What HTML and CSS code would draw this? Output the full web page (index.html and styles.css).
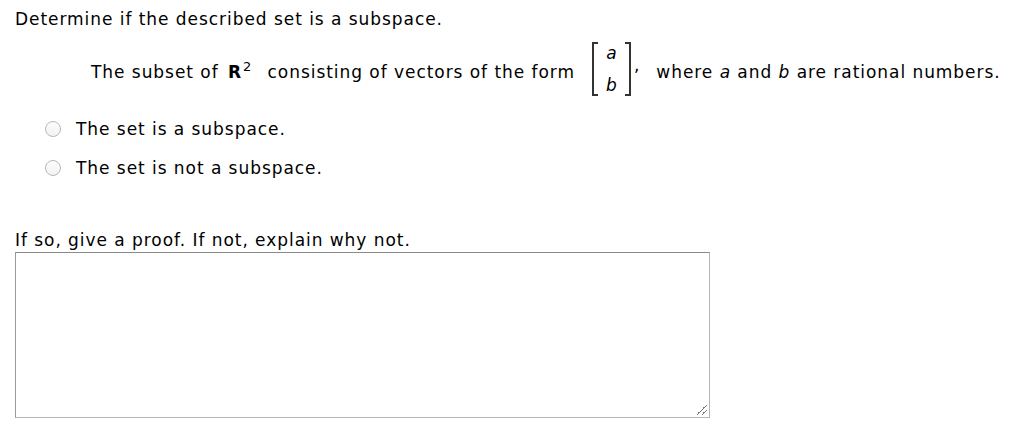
FILE: index.html
```html
<!DOCTYPE html>
<html>
<head>
<meta charset="utf-8">
<link rel="stylesheet" href="styles.css">
</head>
<body>
<div class="question">
  <p class="prompt">Determine if the described set is a subspace.</p>
  <div class="statement">
    <span class="stext">The subset of <b class="bold-r">R<sup>2</sup></b> consisting of vectors of the form</span>
    <span class="matrix">
      <span class="bracket left"></span>
      <span class="entries"><i>a</i><i>b</i></span>
      <span class="bracket right"></span>
    </span>
    <span class="comma">,</span>
    <span class="stext tail">where <i>a</i> and <i>b</i> are rational numbers.</span>
  </div>
  <div class="choices">
    <label class="choice"><span class="radio"></span>The set is a subspace.</label>
    <label class="choice"><span class="radio"></span>The set is not a subspace.</label>
  </div>
  <p class="ask">If so, give a proof. If not, explain why not.</p>
  <div class="answer"><span class="grip"></span></div>
</div>
</body>
</html>
```
FILE: styles.css
```css
html, body { margin: 0; padding: 0; background: #fff; }
body {
  font-family: "DejaVu Sans", Verdana, sans-serif;
  font-size: 17px;
  letter-spacing: 0.95px;
  color: #000;
}
.question { padding: 8px 15px 0 15px; }
.prompt { margin: 0; line-height: 22px; }
.statement {
  display: flex;
  align-items: center;
  margin-top: 12px;
  padding-left: 76px;
  height: 60px;
}
.stext { white-space: nowrap; }
.bold-r { font-weight: bold; margin: 0 9px 0 3px; }
.bold-r sup { font-weight: normal; font-size: 13px; vertical-align: 7px; line-height: 0; margin-left: 1px; }
.matrix { display: flex; align-items: stretch; height: 54px; margin-left: 17px; margin-top: -6px; }
.bracket { width: 4px; border: 2px solid #333; }
.bracket.left { border-right: none; }
.bracket.right { border-left: none; }
.entries {
  display: flex; flex-direction: column; justify-content: space-between;
  align-items: center; width: 27px; font-size: 17px; letter-spacing: 0; line-height: 21px;
  padding: 1px 0 0;
}
.comma { align-self: center; margin: -15px 16px 0 3px; }
.choices { margin-top: 16px; display: flex; flex-direction: column; gap: 17px; }
.choice { display: flex; align-items: center; height: 22px; }
.radio {
  width: 16px; height: 16px; box-sizing: border-box; border-radius: 50%;
  border: 1px solid #b8b8b8; background: linear-gradient(#fdfdfd, #f2f2f2);
  margin: 0 15px 0 30px;
}
.ask { margin: 50px 0 0 0; line-height: 22px; }
.answer {
  position: relative;
  width: 695px; height: 166px; box-sizing: border-box;
  border: 1px solid #b5b5b5; border-top-color: #8a8a8a; border-left-color: #9a9a9a; margin-top: 1px;
}
.grip {
  position: absolute; right: 2px; bottom: 2px; width: 10px; height: 10px;
  background: linear-gradient(135deg, transparent 45%, #777 45%, #777 52%, transparent 52%, transparent 70%, #777 70%, #777 77%, transparent 77%);
}
```
